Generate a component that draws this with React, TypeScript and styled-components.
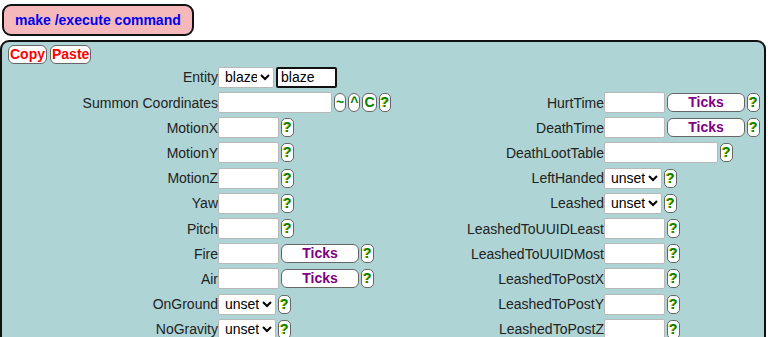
import React from 'react';
import styled, { createGlobalStyle } from 'styled-components';

const GlobalStyle = createGlobalStyle`
	html, body {
		margin: 0;
		padding: 0;
		background: #fff;
		overflow: hidden;
	}
	body {
		font-family: "Liberation Sans", Arial, sans-serif;
		font-size: 14px;
		color: #222;
	}
`;

const FONT = `"Liberation Sans", Arial, sans-serif`;

const Page = styled.div`
	padding-top: 4px;
`;

const Header = styled.button`
	display: inline-flex;
	align-items: center;
	height: 32px;
	box-sizing: border-box;
	margin: 0 0 4px 2px;
	padding: 0 11px;
	border: 2px solid #111;
	border-radius: 9px;
	background: #f5b9bb;
	color: #0000ee;
	font: bold 14px ${FONT};
`;

const Panel = styled.div`
	width: 766px;
	box-sizing: border-box;
	border: 2px solid #111;
	border-radius: 9px 9px 0 0;
	background: #aed4d5;
	padding: 3px 6px 40px;
`;

const Toolbar = styled.div`
	display: flex;
	gap: 3px;
`;

const SmallButton = styled.button<{ $color: string; $width?: number }>`
	height: 19px;
	box-sizing: border-box;
	${(p) => (p.$width ? `width: ${p.$width}px;` : '')}
	padding: 0 1px;
	border: 1px solid #666;
	border-radius: 6px;
	background: #fff;
	color: ${(p) => p.$color};
	font: bold 14px ${FONT};
	line-height: 17px;
`;

const HelpButton = styled(SmallButton)`
	border-radius: 5px;
	text-shadow: -1px 0 0 #e0d000;
`;

const Columns = styled.div`
	display: flex;
`;

const Column = styled.div<{ $width?: number }>`
	${(p) => (p.$width ? `width: ${p.$width}px;` : 'flex: 1;')}
`;

const Fields = styled.div<{ $labelWidth: number; $rowHeight?: number }>`
	display: grid;
	grid-template-columns: ${(p) => p.$labelWidth}px auto;
	grid-auto-rows: ${(p) => p.$rowHeight ?? 25.2}px;
	align-items: center;
`;

const Label = styled.span`
	text-align: right;
	white-space: nowrap;
	color: #222;
`;

const Controls = styled.div`
	display: flex;
	align-items: center;
	gap: 2px;
`;

const TextInput = styled.input<{ $width?: number; $focused?: boolean }>`
	width: ${(p) => p.$width ?? 61}px;
	height: 21px;
	box-sizing: border-box;
	padding: 0 3px;
	border: ${(p) => (p.$focused ? '2px solid #111' : '1px solid #b8b8b8')};
	border-radius: 2px;
	background: #fff;
	color: #000;
	font: 14px ${FONT};
	outline: none;
`;

const Select = styled.select<{ $width: number }>`
	width: ${(p) => p.$width}px;
	height: 21px;
	box-sizing: border-box;
	padding: 0 0 0 2px;
	border: 1px solid #b8b8b8;
	border-radius: 2px;
	background: #fff;
	color: #000;
	font: 14px ${FONT};
`;

type Kind = 'input' | 'wide' | 'ticks' | 'select' | 'coords';

type Field = { label: string; kind: Kind };

const leftFields: Field[] = [
	{ label: 'Summon Coordinates', kind: 'coords' },
	{ label: 'MotionX', kind: 'input' },
	{ label: 'MotionY', kind: 'input' },
	{ label: 'MotionZ', kind: 'input' },
	{ label: 'Yaw', kind: 'input' },
	{ label: 'Pitch', kind: 'input' },
	{ label: 'Fire', kind: 'ticks' },
	{ label: 'Air', kind: 'ticks' },
	{ label: 'OnGround', kind: 'select' },
	{ label: 'NoGravity', kind: 'select' },
];

const rightFields: Field[] = [
	{ label: 'HurtTime', kind: 'ticks' },
	{ label: 'DeathTime', kind: 'ticks' },
	{ label: 'DeathLootTable', kind: 'wide' },
	{ label: 'LeftHanded', kind: 'select' },
	{ label: 'Leashed', kind: 'select' },
	{ label: 'LeashedToUUIDLeast', kind: 'input' },
	{ label: 'LeashedToUUIDMost', kind: 'input' },
	{ label: 'LeashedToPostX', kind: 'input' },
	{ label: 'LeashedToPostY', kind: 'input' },
	{ label: 'LeashedToPostZ', kind: 'input' },
];

const GREEN = '#008000';

const renderControl = (kind: Kind): JSX.Element => {
	switch (kind) {
		case 'coords':
			return (
				<>
					<TextInput $width={114} />
					<SmallButton $color={GREEN}>~</SmallButton>
					<SmallButton $color={GREEN}>^</SmallButton>
					<SmallButton $color={GREEN}>C</SmallButton>
				</>
			);
		case 'wide':
			return <TextInput $width={114} />;
		case 'ticks':
			return (
				<>
					<TextInput />
					<SmallButton $color="#800080" $width={78}>
						Ticks
					</SmallButton>
				</>
			);
		case 'select':
			return (
				<Select $width={58} defaultValue="unset">
					<option value="unset">unset</option>
					<option value="true">true</option>
					<option value="false">false</option>
				</Select>
			);
		default:
			return <TextInput />;
	}
};

const FieldList = ({ fields, labelWidth }: { fields: Field[]; labelWidth: number }) => (
	<Fields $labelWidth={labelWidth}>
		{fields.map((f) => (
			<React.Fragment key={f.label}>
				<Label>{f.label}</Label>
				<Controls>
					{renderControl(f.kind)}
					<HelpButton $color={GREEN}>?</HelpButton>
				</Controls>
			</React.Fragment>
		))}
	</Fields>
);

export default function App() {
	return (
		<Page>
			<GlobalStyle />
			<Header>make /execute command</Header>
			<Panel>
				<Toolbar>
					<SmallButton $color="#ff0000">Copy</SmallButton>
					<SmallButton $color="#ff0000">Paste</SmallButton>
				</Toolbar>
				<Fields $labelWidth={210} $rowHeight={26}>
					<Label>Entity</Label>
					<Controls>
						<Select $width={56} defaultValue="blaze">
							<option value="blaze">blaze</option>
							<option value="zombie">zombie</option>
							<option value="creeper">creeper</option>
						</Select>
						<TextInput $focused defaultValue="blaze" />
					</Controls>
				</Fields>
				<Columns>
					<Column $width={378}>
						<FieldList fields={leftFields} labelWidth={210} />
					</Column>
					<Column>
						<FieldList fields={rightFields} labelWidth={218} />
					</Column>
				</Columns>
			</Panel>
		</Page>
	);
}
